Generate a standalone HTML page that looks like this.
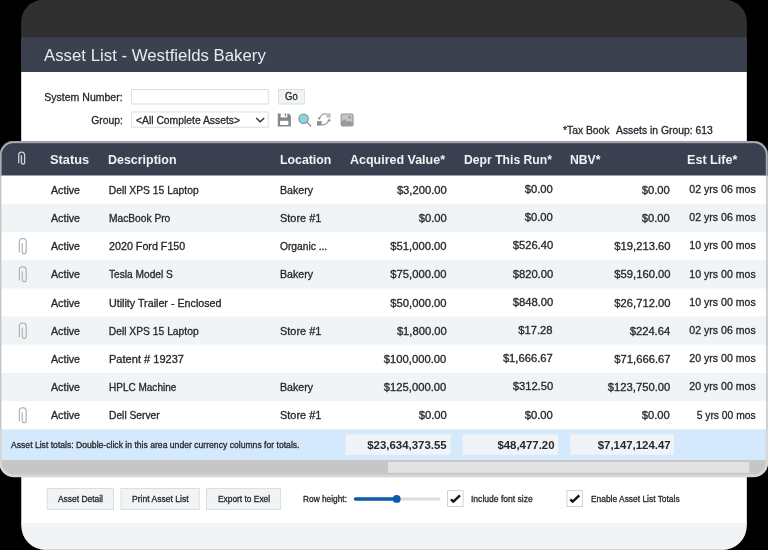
<!DOCTYPE html>
<html>
<head>
<meta charset="utf-8">
<title>Asset List - Westfields Bakery</title>
<style>
*{box-sizing:border-box;margin:0;padding:0}
html,body{width:768px;height:550px;overflow:hidden;background:#000}
body{position:relative;font-family:"Liberation Sans",sans-serif;color:#26282c}
.abs{position:absolute}
.t{position:absolute;white-space:pre;line-height:1;-webkit-text-stroke:0.3px}
.ns{-webkit-text-stroke:0}
</style>
</head>
<body>
<svg class="abs" style="left:0;top:0" width="768" height="550" viewBox="0 0 768 550">
  <defs><clipPath id="dev"><path d="M21.2 21.8 A22 22 0 0 1 43.2 -0.2 H724.8 A22 22 0 0 1 746.8 21.8 V525.8 A24 24 0 0 1 722.8 549.8 H45.3 A24 24 0 0 1 21.3 525.8 Z"/></clipPath></defs>
  <g clip-path="url(#dev)">
    <rect x="0" y="-1" width="768" height="552" fill="#303030"/>
    <rect x="0" y="37.2" width="768" height="34.8" fill="#3c4150"/>
    <rect x="0" y="72" width="768" height="452" fill="#ffffff"/>
    <rect x="0" y="522.7" width="768" height="28" fill="#f1f4f5"/>
    <rect x="0" y="549" width="768" height="2" fill="#e0e2e3"/>
  </g>
</svg>

<svg class="abs" style="left:120px;top:84px" width="200" height="48" viewBox="120 84 200 48">
  <rect x="131.65" y="89.45" width="136.6" height="14.5" fill="#fff" stroke="#d8dadc" stroke-width="0.9"/>
  <rect x="278.65" y="89.45" width="25.7" height="14.6" fill="#f1f4f5" stroke="#d8dadc" stroke-width="0.9"/>
  <rect x="131.65" y="111.95" width="136.6" height="15.3" fill="#fff" stroke="#d8dadc" stroke-width="0.9"/>
</svg>
<svg class="abs" style="left:250px;top:108px" width="110" height="24" viewBox="250 108 110 24">
  <path d="M256.2 118 L260.2 121.8 L264.2 118" fill="none" stroke="#2a2c30" stroke-width="1.25"/>
  <!-- save -->
  <path d="M277.8 113.5 H288.7 L290.9 115.8 V126.5 H277.8 Z" fill="#878787"/>
  <rect x="280.6" y="113.2" width="6.7" height="4.2" fill="#fff"/>
  <rect x="284.8" y="113.5" width="1.3" height="2.6" fill="#878787"/>
  <rect x="280.1" y="120.8" width="8.3" height="4.2" fill="#fff"/>
  <!-- search -->
  <circle cx="303.6" cy="118.8" r="4.75" fill="#85d8dc" stroke="#909090" stroke-width="1.1"/>
  <path d="M307.2 122.4 L310.7 126" stroke="#909090" stroke-width="1.3" stroke-linecap="round"/>
  <!-- refresh -->
  <rect x="326.25" y="113.3" width="4.5" height="4.4" fill="#c2c2c2"/>
  <rect x="317" y="121.1" width="4.7" height="4.5" fill="#8e8e8e"/>
  <path d="M319.4 118.6 A6.2 6.2 0 0 1 326 113.9" fill="none" stroke="#969696" stroke-width="1.1"/>
  <path d="M328.9 120.2 A6.2 6.2 0 0 1 322 124.8" fill="none" stroke="#969696" stroke-width="1.1"/>
  <path d="M317.7 117.3 L321 117.5 L319.1 119.9 Z" fill="#8e8e8e"/>
  <path d="M327.2 121.3 L330.8 121.1 L329.2 118.5 Z" fill="#8e8e8e"/>
  <!-- image -->
  <rect x="340.6" y="113.5" width="13" height="12.9" rx="1.9" fill="#9a9a9a"/>
  <rect x="341.8" y="114.7" width="10.6" height="8" fill="#c6c6c6"/>
  <path d="M341.8 125.3 V121.4 L344.2 119.2 L347.2 121.5 L349.5 120.7 L352.4 122.6 V125.3 Z" fill="#9a9a9a"/>
  <circle cx="349.6" cy="117.4" r="1.45" fill="#9a9a9a"/>
</svg>

<svg class="abs" style="left:0;top:136px" width="768" height="346" viewBox="0 136 768 346">
  <defs><clipPath id="pnl"><rect x="-0.4" y="141.1" width="768.3" height="336.1" rx="14" ry="14"/></clipPath></defs>
  <g clip-path="url(#pnl)">
    <rect x="-1" y="140" width="770" height="340" fill="#c6c6c6"/>
    <rect x="-1" y="140" width="770" height="36" fill="#3b4050"/>
    <rect x="-1" y="175.50" width="770" height="28.70" fill="#ffffff"/>
<rect x="-1" y="203.70" width="770" height="28.70" fill="#f1f4f6"/>
<rect x="-1" y="231.90" width="770" height="28.70" fill="#ffffff"/>
<rect x="-1" y="260.10" width="770" height="28.70" fill="#f1f4f6"/>
<rect x="-1" y="288.30" width="770" height="28.70" fill="#ffffff"/>
<rect x="-1" y="316.50" width="770" height="28.70" fill="#f1f4f6"/>
<rect x="-1" y="344.70" width="770" height="28.70" fill="#ffffff"/>
<rect x="-1" y="372.90" width="770" height="28.70" fill="#f1f4f6"/>
<rect x="-1" y="401.10" width="770" height="28.70" fill="#ffffff"/>
    <rect x="-1" y="429.4" width="770" height="30.7" fill="#d4e9fb"/>
    <rect x="345.7" y="434.5" width="105" height="20.3" fill="#f1f4f6"/>
    <rect x="462.7" y="434.5" width="95.3" height="20.3" fill="#f1f4f6"/>
    <rect x="570.2" y="434.5" width="103.8" height="20.3" fill="#f1f4f6"/>
    <rect x="388" y="462" width="361.4" height="10.9" fill="#e2e2e2"/>
  </g>
</svg>
<svg class="abs" style="left:0;top:136px" width="768" height="346" viewBox="0 136 768 346" fill="none">
  <path d="M0.7 175.5 V155.1 A13 13 0 0 1 13.7 142.1 H753.8 A13 13 0 0 1 766.8 155.1 V175.5" stroke="#7d818c" stroke-width="2.3"/>
  <path d="M0.7 175.5 V155.1 A13 13 0 0 1 13.7 142.1 H753.8 A13 13 0 0 1 766.8 155.1 V175.5" stroke="#b3b7bf" stroke-width="1.1"/>
  <path d="M0.6 175.5 V430 M766.9 175.5 V430" stroke="#c2c3c5" stroke-width="1.5"/>
  <path d="M0.7 429.4 V462.7 A13 13 0 0 0 13.7 475.7 H753.8 A13 13 0 0 0 766.8 462.7 V429.4" stroke="#d6d7d8" stroke-width="2.6"/>
</svg>
<svg class="abs" style="left:0;top:141px" width="40" height="300" viewBox="0 141 40 300">
  <path d="M18.7 162.8 V155.05 A2.95 2.95 0 0 1 24.6 155.05 V162.4 A1.6 1.6 0 0 1 21.4 162.4 V155.6" fill="none" stroke="#d0d2d7" stroke-width="1.3" stroke-linecap="round"/>
  <g fill="none" stroke="#a8a8a8" stroke-width="1.05" stroke-linecap="round">
  <path transform="translate(0 0.00)" d="M19.3 251.9 V241.9 A3.45 3.45 0 0 1 26.2 241.9 V251.65 A2 2 0 0 1 22.2 251.65 V243.4"/>
<path transform="translate(0 28.20)" d="M19.3 251.9 V241.9 A3.45 3.45 0 0 1 26.2 241.9 V251.65 A2 2 0 0 1 22.2 251.65 V243.4"/>
<path transform="translate(0 84.60)" d="M19.3 251.9 V241.9 A3.45 3.45 0 0 1 26.2 241.9 V251.65 A2 2 0 0 1 22.2 251.65 V243.4"/>
<path transform="translate(0 169.20)" d="M19.3 251.9 V241.9 A3.45 3.45 0 0 1 26.2 241.9 V251.65 A2 2 0 0 1 22.2 251.65 V243.4"/>
  </g>
</svg>

<!-- bottom controls -->
<svg class="abs" style="left:40px;top:484px" width="560" height="30" viewBox="40 484 560 30">
  <g fill="#f1f4f5" stroke="#d8dadc" stroke-width="0.9">
    <rect x="47.15" y="488.45" width="66.25" height="20.9"/>
    <rect x="121.05" y="488.45" width="78.2" height="20.9"/>
    <rect x="206.55" y="488.45" width="74.1" height="20.9"/>
  </g>
  <g fill="#fff" stroke="#c3d0de" stroke-width="0.9">
    <rect x="447.55" y="490.65" width="15.6" height="15.9"/>
    <rect x="566.95" y="490.65" width="15.6" height="15.9"/>
  </g>
</svg>
<svg class="abs" style="left:340px;top:486px" width="250" height="24" viewBox="340 486 250 24">
  <path d="M355.4 498.95 H438.8" stroke="#dedede" stroke-width="3.1" stroke-linecap="round"/>
  <path d="M355.5 498.95 H396" stroke="#0b5cad" stroke-width="3.4" stroke-linecap="round"/>
  <circle cx="396.7" cy="498.9" r="3.95" fill="#0b5cad"/>
  <path d="M451 499.3 L453.4 501.6 L460 495.4" fill="none" stroke="#161616" stroke-width="2.5" stroke-linejoin="round"/>
  <path d="M570.3 499.3 L572.7 501.6 L579.3 495.4" fill="none" stroke="#161616" stroke-width="2.5" stroke-linejoin="round"/>
</svg>

<div id="txt" style="position:absolute;left:0;top:0;width:768px;height:550px;will-change:transform">
<div class="t ns" style="top:47.27px;font-size:17.4px;color:#e9eaed;left:43.50px;transform-origin:0 0;transform:scaleX(0.9656);">Asset List - Westfields Bakery</div>
<div class="t" style="top:91.70px;font-size:11.1px;color:#26282c;right:645.50px;transform-origin:100% 0;transform:scaleX(0.9478);">System Number:</div>
<div class="t" style="top:114.60px;font-size:11.1px;color:#26282c;right:645.50px;transform-origin:100% 0;transform:scaleX(0.9345);">Group:</div>
<div class="t" style="top:114.93px;font-size:10.6px;color:#26282c;left:135.80px;transform-origin:0 0;transform:scaleX(0.9757);">&lt;All Complete Assets&gt;</div>
<div class="t" style="top:92.10px;font-size:10.4px;color:#26282c;left:284.60px;transform-origin:0 0;transform:scaleX(0.9153);">Go</div>
<div class="t" style="top:124.51px;font-size:10.5px;color:#26282c;left:562.60px;transform-origin:0 0;transform:scaleX(0.9814);">*Tax Book</div>
<div class="t" style="top:124.51px;font-size:10.5px;color:#26282c;left:616.20px;transform-origin:0 0;transform:scaleX(0.9881);">Assets in Group: 613</div>
<div class="t ns" style="top:153.76px;font-size:12.8px;color:#f1f2f4;font-weight:bold;left:50.00px;transform-origin:0 0;">Status</div>
<div class="t ns" style="top:153.76px;font-size:12.8px;color:#f1f2f4;font-weight:bold;left:108.00px;transform-origin:0 0;transform:scaleX(0.9729);">Description</div>
<div class="t ns" style="top:153.76px;font-size:12.8px;color:#f1f2f4;font-weight:bold;left:279.50px;transform-origin:0 0;transform:scaleX(0.9620);">Location</div>
<div class="t ns" style="top:153.76px;font-size:12.8px;color:#f1f2f4;font-weight:bold;left:349.50px;transform-origin:0 0;transform:scaleX(0.9750);">Acquired Value*</div>
<div class="t ns" style="top:153.76px;font-size:12.8px;color:#f1f2f4;font-weight:bold;left:463.50px;transform-origin:0 0;transform:scaleX(0.9520);">Depr This Run*</div>
<div class="t ns" style="top:153.76px;font-size:12.8px;color:#f1f2f4;font-weight:bold;left:570.00px;transform-origin:0 0;transform:scaleX(0.9531);">NBV*</div>
<div class="t ns" style="top:153.76px;font-size:12.8px;color:#f1f2f4;font-weight:bold;left:687.00px;transform-origin:0 0;transform:scaleX(0.9824);">Est Life*</div>
<div class="t" style="top:185.78px;font-size:10.3px;color:#26282c;left:51.00px;transform-origin:0 0;transform:scaleX(1.0340);">Active</div>
<div class="t" style="top:185.78px;font-size:10.3px;color:#26282c;left:108.75px;transform-origin:0 0;">Dell XPS 15 Laptop</div>
<div class="t" style="top:185.78px;font-size:10.3px;color:#26282c;left:280.00px;transform-origin:0 0;transform:scaleX(1.0324);">Bakery</div>
<div class="t" style="top:185.78px;font-size:10.3px;color:#26282c;right:321.50px;transform-origin:100% 0;transform:scaleX(1.0900);">$3,200.00</div>
<div class="t" style="top:185.08px;font-size:10.3px;color:#26282c;right:215.10px;transform-origin:100% 0;transform:scaleX(1.0900);">$0.00</div>
<div class="t" style="top:185.78px;font-size:10.3px;color:#26282c;right:97.90px;transform-origin:100% 0;transform:scaleX(1.0900);">$0.00</div>
<div class="t" style="top:184.98px;font-size:10.3px;color:#26282c;right:12.00px;transform-origin:100% 0;transform:scaleX(1.0252);">02 yrs 06 mos</div>
<div class="t" style="top:213.98px;font-size:10.3px;color:#26282c;left:51.00px;transform-origin:0 0;transform:scaleX(1.0340);">Active</div>
<div class="t" style="top:213.98px;font-size:10.3px;color:#26282c;left:108.75px;transform-origin:0 0;transform:scaleX(0.9917);">MacBook Pro</div>
<div class="t" style="top:213.98px;font-size:10.3px;color:#26282c;left:280.00px;transform-origin:0 0;transform:scaleX(1.0607);">Store #1</div>
<div class="t" style="top:213.98px;font-size:10.3px;color:#26282c;right:321.50px;transform-origin:100% 0;transform:scaleX(1.0900);">$0.00</div>
<div class="t" style="top:213.28px;font-size:10.3px;color:#26282c;right:215.10px;transform-origin:100% 0;transform:scaleX(1.0900);">$0.00</div>
<div class="t" style="top:213.98px;font-size:10.3px;color:#26282c;right:97.90px;transform-origin:100% 0;transform:scaleX(1.0900);">$0.00</div>
<div class="t" style="top:213.18px;font-size:10.3px;color:#26282c;right:12.00px;transform-origin:100% 0;transform:scaleX(1.0252);">02 yrs 06 mos</div>
<div class="t" style="top:242.18px;font-size:10.3px;color:#26282c;left:51.00px;transform-origin:0 0;transform:scaleX(1.0340);">Active</div>
<div class="t" style="top:242.18px;font-size:10.3px;color:#26282c;left:108.75px;transform-origin:0 0;transform:scaleX(1.0412);">2020 Ford F150</div>
<div class="t" style="top:242.18px;font-size:10.3px;color:#26282c;left:280.00px;transform-origin:0 0;transform:scaleX(0.9937);">Organic ...</div>
<div class="t" style="top:242.18px;font-size:10.3px;color:#26282c;right:321.50px;transform-origin:100% 0;transform:scaleX(1.0900);">$51,000.00</div>
<div class="t" style="top:241.48px;font-size:10.3px;color:#26282c;right:215.10px;transform-origin:100% 0;transform:scaleX(1.0900);">$526.40</div>
<div class="t" style="top:242.18px;font-size:10.3px;color:#26282c;right:97.90px;transform-origin:100% 0;transform:scaleX(1.0900);">$19,213.60</div>
<div class="t" style="top:241.38px;font-size:10.3px;color:#26282c;right:12.00px;transform-origin:100% 0;transform:scaleX(1.0252);">10 yrs 00 mos</div>
<div class="t" style="top:270.38px;font-size:10.3px;color:#26282c;left:51.00px;transform-origin:0 0;transform:scaleX(1.0340);">Active</div>
<div class="t" style="top:270.38px;font-size:10.3px;color:#26282c;left:108.75px;transform-origin:0 0;transform:scaleX(0.9863);">Tesla Model S</div>
<div class="t" style="top:270.38px;font-size:10.3px;color:#26282c;left:280.00px;transform-origin:0 0;transform:scaleX(1.0324);">Bakery</div>
<div class="t" style="top:270.38px;font-size:10.3px;color:#26282c;right:321.50px;transform-origin:100% 0;transform:scaleX(1.0900);">$75,000.00</div>
<div class="t" style="top:269.68px;font-size:10.3px;color:#26282c;right:215.10px;transform-origin:100% 0;transform:scaleX(1.0900);">$820.00</div>
<div class="t" style="top:270.38px;font-size:10.3px;color:#26282c;right:97.90px;transform-origin:100% 0;transform:scaleX(1.0900);">$59,160.00</div>
<div class="t" style="top:269.58px;font-size:10.3px;color:#26282c;right:12.00px;transform-origin:100% 0;transform:scaleX(1.0252);">10 yrs 00 mos</div>
<div class="t" style="top:298.58px;font-size:10.3px;color:#26282c;left:51.00px;transform-origin:0 0;transform:scaleX(1.0340);">Active</div>
<div class="t" style="top:298.58px;font-size:10.3px;color:#26282c;left:108.75px;transform-origin:0 0;transform:scaleX(1.0402);">Utility Trailer - Enclosed</div>
<div class="t" style="top:298.58px;font-size:10.3px;color:#26282c;right:321.50px;transform-origin:100% 0;transform:scaleX(1.0900);">$50,000.00</div>
<div class="t" style="top:297.88px;font-size:10.3px;color:#26282c;right:215.10px;transform-origin:100% 0;transform:scaleX(1.0900);">$848.00</div>
<div class="t" style="top:298.58px;font-size:10.3px;color:#26282c;right:97.90px;transform-origin:100% 0;transform:scaleX(1.0900);">$26,712.00</div>
<div class="t" style="top:297.78px;font-size:10.3px;color:#26282c;right:12.00px;transform-origin:100% 0;transform:scaleX(1.0252);">10 yrs 00 mos</div>
<div class="t" style="top:326.78px;font-size:10.3px;color:#26282c;left:51.00px;transform-origin:0 0;transform:scaleX(1.0340);">Active</div>
<div class="t" style="top:326.78px;font-size:10.3px;color:#26282c;left:108.75px;transform-origin:0 0;">Dell XPS 15 Laptop</div>
<div class="t" style="top:326.78px;font-size:10.3px;color:#26282c;left:280.00px;transform-origin:0 0;transform:scaleX(1.0607);">Store #1</div>
<div class="t" style="top:326.78px;font-size:10.3px;color:#26282c;right:321.50px;transform-origin:100% 0;transform:scaleX(1.0900);">$1,800.00</div>
<div class="t" style="top:326.08px;font-size:10.3px;color:#26282c;right:215.10px;transform-origin:100% 0;transform:scaleX(1.0900);">$17.28</div>
<div class="t" style="top:326.78px;font-size:10.3px;color:#26282c;right:97.90px;transform-origin:100% 0;transform:scaleX(1.0900);">$224.64</div>
<div class="t" style="top:325.98px;font-size:10.3px;color:#26282c;right:12.00px;transform-origin:100% 0;transform:scaleX(1.0252);">02 yrs 06 mos</div>
<div class="t" style="top:354.98px;font-size:10.3px;color:#26282c;left:51.00px;transform-origin:0 0;transform:scaleX(1.0340);">Active</div>
<div class="t" style="top:354.98px;font-size:10.3px;color:#26282c;left:108.75px;transform-origin:0 0;transform:scaleX(1.0736);">Patent # 19237</div>
<div class="t" style="top:354.98px;font-size:10.3px;color:#26282c;right:321.50px;transform-origin:100% 0;transform:scaleX(1.0900);">$100,000.00</div>
<div class="t" style="top:354.28px;font-size:10.3px;color:#26282c;right:215.10px;transform-origin:100% 0;transform:scaleX(1.0900);">$1,666.67</div>
<div class="t" style="top:354.98px;font-size:10.3px;color:#26282c;right:97.90px;transform-origin:100% 0;transform:scaleX(1.0900);">$71,666.67</div>
<div class="t" style="top:354.18px;font-size:10.3px;color:#26282c;right:12.00px;transform-origin:100% 0;transform:scaleX(1.0252);">20 yrs 00 mos</div>
<div class="t" style="top:383.18px;font-size:10.3px;color:#26282c;left:51.00px;transform-origin:0 0;transform:scaleX(1.0340);">Active</div>
<div class="t" style="top:383.18px;font-size:10.3px;color:#26282c;left:108.75px;transform-origin:0 0;transform:scaleX(0.9718);">HPLC Machine</div>
<div class="t" style="top:383.18px;font-size:10.3px;color:#26282c;left:280.00px;transform-origin:0 0;transform:scaleX(1.0324);">Bakery</div>
<div class="t" style="top:383.18px;font-size:10.3px;color:#26282c;right:321.50px;transform-origin:100% 0;transform:scaleX(1.0900);">$125,000.00</div>
<div class="t" style="top:382.48px;font-size:10.3px;color:#26282c;right:215.10px;transform-origin:100% 0;transform:scaleX(1.0900);">$312.50</div>
<div class="t" style="top:383.18px;font-size:10.3px;color:#26282c;right:97.90px;transform-origin:100% 0;transform:scaleX(1.0900);">$123,750.00</div>
<div class="t" style="top:382.38px;font-size:10.3px;color:#26282c;right:12.00px;transform-origin:100% 0;transform:scaleX(1.0252);">20 yrs 00 mos</div>
<div class="t" style="top:411.38px;font-size:10.3px;color:#26282c;left:51.00px;transform-origin:0 0;transform:scaleX(1.0340);">Active</div>
<div class="t" style="top:411.38px;font-size:10.3px;color:#26282c;left:108.75px;transform-origin:0 0;transform:scaleX(0.9953);">Dell Server</div>
<div class="t" style="top:411.38px;font-size:10.3px;color:#26282c;left:280.00px;transform-origin:0 0;transform:scaleX(1.0607);">Store #1</div>
<div class="t" style="top:411.38px;font-size:10.3px;color:#26282c;right:321.50px;transform-origin:100% 0;transform:scaleX(1.0900);">$0.00</div>
<div class="t" style="top:410.68px;font-size:10.3px;color:#26282c;right:215.10px;transform-origin:100% 0;transform:scaleX(1.0900);">$0.00</div>
<div class="t" style="top:411.38px;font-size:10.3px;color:#26282c;right:97.90px;transform-origin:100% 0;transform:scaleX(1.0900);">$0.00</div>
<div class="t" style="top:410.58px;font-size:10.3px;color:#26282c;right:12.40px;transform-origin:100% 0;">5 yrs 00 mos</div>
<div class="t" style="top:440.87px;font-size:8.9px;color:#26282c;left:10.80px;transform-origin:0 0;transform:scaleX(0.9699);">Asset List totals: Double-click in this area under currency columns for totals.</div>
<div class="t ns" style="top:439.87px;font-size:10.9px;color:#26282c;font-weight:bold;right:321.40px;transform-origin:100% 0;transform:scaleX(1.0502);">$23,634,373.55</div>
<div class="t ns" style="top:439.87px;font-size:10.9px;color:#26282c;font-weight:bold;right:213.80px;transform-origin:100% 0;transform:scaleX(1.0474);">$48,477.20</div>
<div class="t ns" style="top:439.87px;font-size:10.9px;color:#26282c;font-weight:bold;right:97.80px;transform-origin:100% 0;transform:scaleX(1.0466);">$7,147,124.47</div>
<div class="t" style="top:494.57px;font-size:8.9px;color:#26282c;left:57.80px;transform-origin:0 0;transform:scaleX(0.9481);">Asset Detail</div>
<div class="t" style="top:494.57px;font-size:8.9px;color:#26282c;left:131.60px;transform-origin:0 0;transform:scaleX(0.9642);">Print Asset List</div>
<div class="t" style="top:494.57px;font-size:8.9px;color:#26282c;left:217.60px;transform-origin:0 0;transform:scaleX(0.9430);">Export to Exel</div>
<div class="t" style="top:494.57px;font-size:8.9px;color:#26282c;left:303.30px;transform-origin:0 0;transform:scaleX(0.9387);">Row height:</div>
<div class="t" style="top:494.57px;font-size:8.9px;color:#26282c;left:471.00px;transform-origin:0 0;transform:scaleX(0.9619);">Include font size</div>
<div class="t" style="top:494.57px;font-size:8.9px;color:#26282c;left:590.70px;transform-origin:0 0;transform:scaleX(0.9468);">Enable Asset List Totals</div>
</div>
</body>
</html>
